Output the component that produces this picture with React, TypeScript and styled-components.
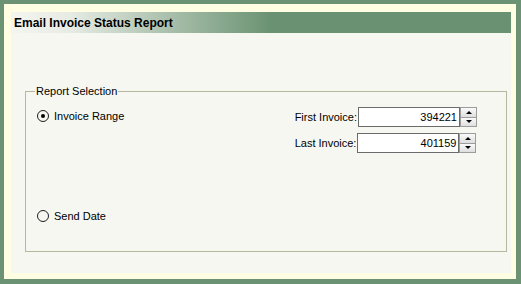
import React, { useState } from "react";
import styled, { createGlobalStyle } from "styled-components";

const GlobalStyle = createGlobalStyle`
  html, body {
    margin: 0;
    padding: 0;
  }
  body {
    font-family: "Liberation Sans", Arial, sans-serif;
    font-size: 11px;
    color: #000;
  }
`;

const Frame = styled.div`
  width: 521px;
  height: 284px;
  box-sizing: border-box;
  background: #6b9373;
  padding: 4px 5px 5px 4px;
`;

const Matte = styled.div`
  height: 100%;
  box-sizing: border-box;
  background: #fffee2;
  padding: 8px 5px 6px 7px;
`;

const Panel = styled.div`
  height: 100%;
  box-sizing: border-box;
  background: #f6f7f1;
  display: flex;
  flex-direction: column;
`;

const TitleBar = styled.div`
  height: 21px;
  flex: none;
  display: flex;
  align-items: center;
  padding-left: 3px;
  background: linear-gradient(90deg, #f4f5f0 0%, #e6ebe3 12%, #6a9272 52%, #6a9272 100%);
  font-weight: bold;
  font-size: 12px;
`;

const Body = styled.div`
  flex: 1;
  padding: 52px 4px 21px 14px;
  display: flex;
`;

const GroupBox = styled.fieldset`
  flex: 1;
  margin: 0;
  border: 1px solid #b5b89f;
  padding: 10px 29px 0 11px;
  min-width: 0;
`;

const Legend = styled.legend`
  padding: 0 1px;
  margin-left: -2px;
  line-height: 13px;
`;

const TopRow = styled.div`
  display: flex;
  justify-content: space-between;
  align-items: flex-start;
`;

const RadioLabel = styled.label<{ $offset?: number }>`
  display: flex;
  align-items: center;
  gap: 5px;
  height: 13px;
  margin-top: ${(p) => p.$offset ?? 0}px;
  cursor: default;
  user-select: none;
`;

const RadioDot = styled.span<{ $checked: boolean }>`
  width: 12px;
  height: 12px;
  box-sizing: border-box;
  border: 1px solid #1e1e1e;
  border-radius: 50%;
  display: flex;
  align-items: center;
  justify-content: center;
  &::after {
    content: "";
    width: 4px;
    height: 4px;
    border-radius: 50%;
    background: #000;
    display: ${(p) => (p.$checked ? "block" : "none")};
  }
`;

const Fields = styled.div`
  display: flex;
  flex-direction: column;
  gap: 6px;
  margin-top: -1px;
`;

const FieldRow = styled.div`
  display: flex;
  align-items: center;
`;

const FieldLabel = styled.span`
  margin-right: 1px;
`;

const NumberBox = styled.div`
  width: 102px;
  height: 20px;
  box-sizing: border-box;
  border: 1px solid #6b6b6b;
  background: #fff;
  display: flex;
  align-items: center;
  justify-content: flex-end;
  padding-right: 2px;
`;

const Spinner = styled.div`
  width: 17px;
  height: 20px;
  display: flex;
  flex-direction: column;
`;

const SpinButton = styled.div<{ $up?: boolean }>`
  flex: 1;
  box-sizing: border-box;
  border: 1px solid #9c9c9c;
  border-top-width: ${(p) => (p.$up ? 1 : 0)}px;
  background: linear-gradient(180deg, #fafafa 0%, #dedede 100%);
  display: flex;
  align-items: center;
  justify-content: center;
  &::after {
    content: "";
    width: 0;
    height: 0;
    border-left: 3px solid transparent;
    border-right: 3px solid transparent;
    ${(p) =>
      p.$up ? "border-bottom: 3px solid #000;" : "border-top: 3px solid #000;"}
  }
`;

const NumberField = ({ label, value }: { label: string; value: number }) => (
  <FieldRow>
    <FieldLabel>{label}</FieldLabel>
    <NumberBox>{value}</NumberBox>
    <Spinner>
      <SpinButton $up />
      <SpinButton />
    </Spinner>
  </FieldRow>
);

const App = () => {
  const [mode, setMode] = useState<"range" | "date">("range");

  return (
    <>
      <GlobalStyle />
      <Frame>
        <Matte>
          <Panel>
            <TitleBar>Email Invoice Status Report</TitleBar>
            <Body>
              <GroupBox>
                <Legend>Report Selection</Legend>
                <TopRow>
                  <RadioLabel $offset={1} onClick={() => setMode("range")}>
                    <RadioDot $checked={mode === "range"} />
                    Invoice Range
                  </RadioLabel>
                  <Fields>
                    <NumberField label="First Invoice:" value={394221} />
                    <NumberField label="Last Invoice:" value={401159} />
                  </Fields>
                </TopRow>
                <RadioLabel $offset={56} onClick={() => setMode("date")}>
                  <RadioDot $checked={mode === "date"} />
                  Send Date
                </RadioLabel>
              </GroupBox>
            </Body>
          </Panel>
        </Matte>
      </Frame>
    </>
  );
};

export default App;
